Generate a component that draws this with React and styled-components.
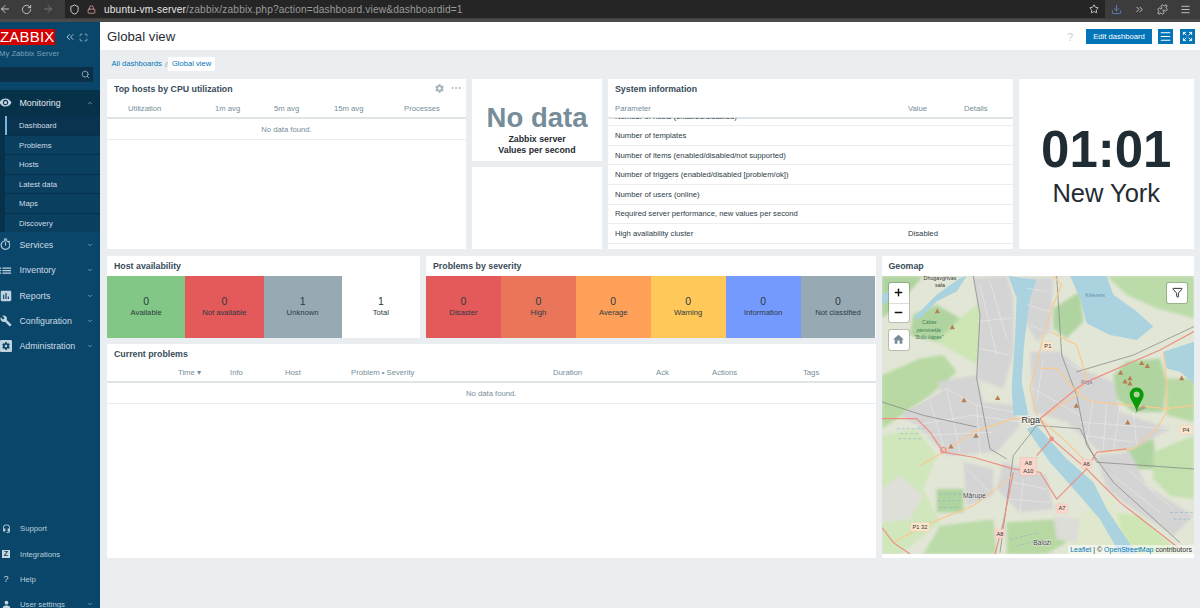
import React from 'react';
import styled, { createGlobalStyle } from 'styled-components';
import {
  ArrowLeft, ArrowRight, RotateCw, Shield, Star, Download, ChevronsRight, Puzzle, Menu,
  ChevronDown, ChevronUp, ChevronsLeft, Search, Ellipsis, Filter, Maximize, Expand, Plus, Minus, Lock,
} from 'lucide-react';
import { MdVisibility, MdOutlineTimer, MdList, MdAssessment, MdBuild, MdHeadsetMic, MdPerson, MdHome } from 'react-icons/md';
import { FaCog } from 'react-icons/fa';

const GlobalStyle = createGlobalStyle`
  html, body { margin: 0; padding: 0; height: 608px; overflow: hidden; background: #ebeef0; }
  body { font-family: "Liberation Sans", Arial, sans-serif; font-size: 7.7px; color: #1f2c33; }
  * { box-sizing: border-box; }
`;

const Page = styled.div`
  width: 1200px;
  height: 608px;
  display: flex;
  flex-direction: column;
  overflow: hidden;
`;

// Browser chrome
const Browser = styled.div`
  height: 22px;
  flex: none;
  background: #3c3c3c;
  display: flex;
  align-items: flex-start;
  color: #c8c8c8;
  border-bottom: 3px solid #4a4a4a;
`;
const NavIcons = styled.div`
  width: 65px;
  height: 18px;
  flex: none;
  display: flex;
  align-items: center;
  gap: 10px;
  padding-left: 0;
  svg:first-child { margin-left: -1px; }
`;
const UrlBar = styled.div`
  width: 1040px;
  height: 18px;
  flex: none;
  background: #252525;
  display: flex;
  align-items: center;
  padding: 0 6px 0 4px;
  gap: 5px;
  font-size: 10.2px;
  letter-spacing: 0.14px;
  color: #9a9a9a;
  b { font-weight: 400; color: #e6e6e6; }
`;
const LockMark = styled(Lock)`
  margin-left: 2px;
`;
const UrlText = styled.span`
  flex: 1;
  margin-left: 3px;
`;
const ToolIcons = styled.div`
  flex: 1;
  height: 18px;
  display: flex;
  align-items: center;
  gap: 12px;
  padding-left: 6px;
`;

const Body = styled.div`
  flex: 1;
  display: flex;
  min-height: 0;
`;

// Sidebar
const Sidebar = styled.aside`
  width: 100px;
  flex: none;
  background: #0a466a;
  color: #d5e1e8;
  display: flex;
  flex-direction: column;
  overflow: hidden;
`;
const LogoRow = styled.div`
  display: flex;
  align-items: center;
  height: 16px;
  margin-top: 7px;
`;
const Logo = styled.div`
  width: 55px;
  height: 16px;
  background: #d40000;
  color: #fff;
  font-size: 15px;
  line-height: 16px;
  letter-spacing: 0.2px;
  white-space: nowrap;
  overflow: hidden;
  text-align: right;
  padding-right: 2px;
`;
const LogoTools = styled.div`
  display: flex;
  align-items: center;
  gap: 3px;
  margin-left: 9px;
  color: #a9c3d2;
`;
const ServerName = styled.div`
  font-size: 7.7px;
  color: #7ba0b6;
  margin-top: 4px;
  height: 10px;
  line-height: 10px;
  margin-left: -1px;
  white-space: nowrap;
`;
const SearchBox = styled.div`
  width: 93px;
  height: 15px;
  margin-top: 8px;
  background: #0a2f46;
  display: flex;
  align-items: center;
  justify-content: flex-end;
  padding-right: 3px;
  color: #a6bfcd;
`;
const Group = styled.div`
  margin-top: 8px;
  background: #073049;
`;
const MenuRow = styled.div`
  height: 25.3px;
  display: flex;
  align-items: center;
  font-size: 8.8px;
  color: ${(p) => (p.$active ? '#e4ecf0' : '#cfdde6')};
  padding-right: 7px;
`;
const MenuIcon = styled.span`
  width: 19.5px;
  margin-left: -4px;
  flex: none;
  display: flex;
  justify-content: center;
  color: #bfd2dd;
`;
const MenuLabel = styled.span`
  flex: 1;
  margin-left: ${(p) => p.$indent ?? 4}px;
  white-space: nowrap;
`;
const GearBadge = styled.span`
  width: 12px;
  height: 12px;
  border-radius: 1px;
  background: #bfd2dd;
  color: #0a466a;
  display: flex;
  align-items: center;
  justify-content: center;
`;
const SubItem = styled.div`
  height: 19.5px;
  margin-left: 5px;
  padding-left: 14px;
  display: flex;
  align-items: center;
  font-size: 7.7px;
  color: #cfdde6;
  background: #0a3f60;
  border-top: 1px solid #07314b;
  position: relative;
  ${(p) => p.$current && `
    background: #0a3350;
    &::before {
      content: '';
      position: absolute;
      left: 0; top: 0; bottom: 0;
      width: 2px;
      background: #76b5dc;
    }
  `}
`;
const Spacer = styled.div`
  flex: 1;
`;
const FootRow = styled.div`
  height: 25.2px;
  flex: none;
  display: flex;
  align-items: center;
  font-size: 7.7px;
  color: #bcd0dc;
  padding-right: 7px;
  margin-bottom: ${(p) => (p.$last ? -9 : 0)}px;
`;
const FootIcon = styled.span`
  width: 12px;
  margin-right: 8px;
  flex: none;
  display: flex;
  justify-content: center;
  color: #c8d8e1;
  font-size: 9px;
`;
const ZBadge = styled.span`
  width: 8px;
  height: 8px;
  background: #c8d8e1;
  color: #0a466a;
  font-size: 7px;
  font-weight: 700;
  line-height: 8px;
  text-align: center;
`;

// Main area
const Main = styled.main`
  flex: 1;
  min-width: 0;
  display: flex;
  flex-direction: column;
`;
const Header = styled.header`
  height: 28px;
  flex: none;
  background: #fff;
  display: flex;
  align-items: center;
  padding: 2px 5px 1px 7px;
`;
const Title = styled.h1`
  flex: 1;
  margin: 0;
  font-size: 13.2px;
  font-weight: 400;
  color: #1f2c33;
`;
const HelpMark = styled.span`
  font-size: 10.5px;
  color: #c5ccd0;
  margin-right: 13px;
`;
const PrimaryButton = styled.button`
  height: 15px;
  width: 66px;
  border: 0;
  padding: 0;
  background: #0275b8;
  color: #fff;
  font: 7.7px "Liberation Sans", Arial, sans-serif;
  margin-right: 6px;
`;
const IconButton = styled.button`
  height: 15px;
  width: 15px;
  border: 0;
  padding: 0;
  background: #0275b8;
  color: #fff;
  display: flex;
  align-items: center;
  justify-content: center;
  margin-left: ${(p) => p.$gap || 0}px;
`;
const Crumbs = styled.nav`
  height: 29px;
  flex: none;
  display: flex;
  align-items: center;
  padding: 0 0 1px 8px;
  font-size: 7.6px;
  color: #0275b8;
`;
const Crumb = styled.span`
  padding: 3px 3.5px;
  height: 14px;
  line-height: 8px;
  background: ${(p) => (p.$current ? '#fff' : 'transparent')};
`;
const Sep = styled.span`
  color: #768d99;
  margin: 0 1px 0 0;
`;

const Board = styled.div`
  padding-left: 7px;
  width: 1094px;
  display: flex;
  flex-direction: column;
  gap: 7px;
`;
const TopRow = styled.div`
  display: flex;
  gap: 6px;
  height: 170px;
`;
const BottomRow = styled.div`
  display: flex;
  gap: 6px;
  height: 302px;
`;
const Card = styled.section`
  background: #fff;
  width: ${(p) => (p.$w ? `${p.$w}px` : 'auto')};
  flex: ${(p) => (p.$grow ? 1 : 'none')};
  position: relative;
  overflow: hidden;
  display: flex;
  flex-direction: column;
  min-height: 0;
`;
const CardTitle = styled.h2`
  margin: 0;
  height: 20px;
  padding: 0 7px;
  display: flex;
  align-items: center;
  font-size: 8.8px;
  font-weight: 700;
  color: #384c5a;
  flex: none;
`;
const CardTools = styled.div`
  position: absolute;
  right: 4px;
  top: 3px;
  display: flex;
  align-items: center;
  gap: 6px;
  color: #a8b4bb;
`;
const HeadRow = styled.div`
  display: grid;
  grid-template-columns: ${(p) => p.$cols};
  height: ${(p) => p.$h || 18}px;
  padding-left: ${(p) => p.$pad || 0}px;
  align-items: center;
  font-size: 7.7px;
  color: #768d99;
  border-bottom: 2px solid #dfe4e7;
  flex: none;
`;
const EmptyRow = styled.div`
  height: 21px;
  display: flex;
  align-items: center;
  justify-content: center;
  font-size: 7.7px;
  color: #768d99;
  border-bottom: 1px solid #ebeef0;
  flex: none;
`;
const SmallColumn = styled.div`
  width: 130px;
  flex: none;
  display: flex;
  flex-direction: column;
  gap: 6px;
`;
const NoData = styled(Card)`
  height: 82px;
  align-items: center;
  padding-top: 25px;
  color: #1f2c33;
`;
const BigValue = styled.div`
  font-size: 27.5px;
  font-weight: 700;
  line-height: 28px;
  color: #768d99;
`;
const NoDataLabel = styled.div`
  font-size: 8.8px;
  font-weight: 700;
  line-height: 11px;
  text-align: center;
  margin-top: 2px;
`;
const Blank = styled(Card)`
  height: 82px;
`;
const InfoBody = styled.div`
  flex: 1;
  overflow: hidden;
  min-height: 0;
  margin-top: -1px;
`;
const InfoRow = styled.div`
  display: grid;
  grid-template-columns: 293px 56px 1fr;
  height: 19.6px;
  align-items: center;
  padding-left: 7px;
  font-size: 7.7px;
  color: #2c3b44;
  border-bottom: 1px solid #ebeef0;
  flex: none;
  &:first-child { margin-top: -11.3px; }
`;
const ClockCard = styled(Card)`
  align-items: center;
  justify-content: center;
  padding-top: 4px;
`;
const ClockTime = styled.div`
  font-size: 51px;
  font-weight: 700;
  line-height: 50px;
  color: #1f2c33;
`;
const ClockZone = styled.div`
  font-size: 25.5px;
  line-height: 30px;
  color: #1f2c33;
  margin-top: 3px;
`;
const LeftStack = styled.div`
  width: 768.5px;
  flex: none;
  display: flex;
  flex-direction: column;
  gap: 6px;
`;
const StatRow = styled.div`
  display: flex;
  gap: 6px;
  height: 82px;
  flex: none;
`;
const Tiles = styled.div`
  flex: 1;
  display: grid;
  grid-template-columns: repeat(${(p) => p.$n}, 1fr);
`;
const Tile = styled.div`
  background: ${(p) => p.$bg};
  display: flex;
  flex-direction: column;
  align-items: center;
  justify-content: center;
  font-size: 7.7px;
  color: #2c3b44;
  line-height: 11px;
  padding-bottom: 1px;
  span:first-child { font-size: 10.5px; line-height: 12px; }
`;
const MapBox = styled.div`
  position: relative;
  flex: none;
  height: 278px;
  overflow: hidden;
  svg { display: block; }
`;
const MapControls = styled.div`
  position: absolute;
  left: 7px;
  top: 7px;
  display: flex;
  flex-direction: column;
  gap: 8px;
`;
const MapGroup = styled.div`
  width: 20px;
  background: #fff;
  border-radius: 2px;
  box-shadow: 0 0 0 1px rgba(0, 0, 0, 0.18);
  display: flex;
  flex-direction: column;
  color: ${(p) => p.$color || '#111'};
`;
const MapBtn = styled.div`
  height: 19.5px;
  display: flex;
  align-items: center;
  justify-content: center;
  & + & { border-top: 1px solid #ddd; }
`;
const MapFilter = styled(MapBtn)`
  position: absolute;
  right: 7px;
  top: 7px;
  width: 20px;
  background: #fff;
  border-radius: 2px;
  box-shadow: 0 0 0 1px rgba(0, 0, 0, 0.18);
  color: #222;
`;
const Attribution = styled.div`
  position: absolute;
  right: 0;
  bottom: 0;
  padding: 0 2px;
  font-size: 7px;
  line-height: 9px;
  color: #333;
  background: rgba(255, 255, 255, 0.55);
  a { color: #0275b8; }
`;

const cpuCols = '21px 87px 59px 60px 70px 1fr';
const problemCols = '71px 52px 55px 66px 202px 103px 56px 91px 1fr';

const peaks = [
  [172, 168], [217, 216], [722, 352], [785, 323], [802, 332], [735, 378], [750, 368], [750, 384],
  [905, 368], [252, 434], [353, 427], [288, 540], [213, 572], [589, 450], [743, 500],
];

const shields = [
  [487, 260, 33, 26, 'P1'], [900, 510, 36, 26, 'P4'], [603, 612, 33, 26, 'A6'], [528, 744, 36, 28, 'A7'],
  [345, 820, 30, 26, 'A8'], [92, 800, 56, 26, 'P1 32'],
];

// thin street lines that give the town its grain
const streets = [
  'M70 470L200 400 290 450 400 470', 'M100 510L280 480 420 500', 'M130 540L340 530', 'M200 400L240 590',
  'M150 440L190 570', 'M290 450L300 600', 'M640 430L620 560', 'M680 440L670 580', 'M720 450L700 590',
  'M760 470L770 570', 'M600 500L860 520', 'M610 540L760 560', 'M300 90L350 300', 'M330 80L380 250',
  'M290 200L395 190', 'M295 280L390 300', 'M440 100L500 110', 'M440 150L510 170', 'M450 210L500 230',
  'M400 680L500 700', 'M380 730L510 740', 'M430 670L420 770', 'M700 660L840 770', 'M740 640L880 760',
  'M260 640L330 710', 'M560 320L610 350', 'M460 400L600 480', 'M490 310L470 440',
];

const OsmMap = () => (
  <svg width="312" height="278" viewBox="6 64 936 830" preserveAspectRatio="none">
    <defs>
      <filter id="soft" x="-5%" y="-5%" width="110%" height="110%"><feGaussianBlur stdDeviation="5" /></filter>
    </defs>
    <rect x="6" y="64" width="936" height="830" fill="#e2e6d6" />
    <g filter="url(#soft)">
      {/* forests and parks */}
      <g fill="#cde6b4">
        <path d="M6 64H130L90 110 30 170 6 190Z" fill="#b0d4a0" />
        <path d="M90 240L100 180 170 150 240 190 230 240 170 260Z" fill="#b0d4a0" />
        <path d="M170 260L240 190 290 150 380 170 390 300 330 350 260 310Z" />
        <path d="M6 360L120 310 190 300 230 350 150 420 80 470 6 520Z" fill="#b8d9a3" />
        <path d="M520 160L600 110 610 200 560 250 520 220Z" fill="#b0d4a0" />
        <path d="M700 360L740 320 840 310 860 380 850 470 760 470 710 430Z" fill="#b0d4a0" />
        <path d="M860 370L942 370 942 500 860 480Z" fill="#b8d9a3" />
        <path d="M680 64H942V190L830 160 740 120Z" fill="#bbdba9" />
        <path d="M740 580L820 550 830 640 760 640Z" fill="#b0d4a0" />
        <path d="M820 590L942 540V730L870 720 820 670Z" fill="#c3e0ae" />
        <path d="M6 540L110 520 170 600 130 700 180 800 60 894H6Z" fill="#d0e6bb" />
        <path d="M170 700H250L250 770 170 770Z" fill="#b0d4a0" />
        <path d="M180 810L340 790 350 894H130Z" fill="#bbdba9" />
        <path d="M380 800L520 790 560 860 500 894H380Z" fill="#b8d9a3" />
        <path d="M700 770L780 780 900 894H760Z" fill="#cde6b4" />
        <path d="M560 800L700 720 740 894H560Z" fill="#dfe8cc" />
      </g>
      {/* built up */}
      <g fill="#d4d4d4">
        <path d="M60 480L210 390 300 440 400 450 420 510 350 590 200 600 110 510Z" />
        <path d="M280 70L380 64 400 130 400 290 370 400 290 370 300 180Z" />
        <path d="M450 290L540 290 600 340 700 380 720 470 870 520 760 580 660 590 560 500 460 470Z" />
        <path d="M650 600L750 590 800 690 940 780 880 840 760 760 680 700Z" />
        <path d="M430 70H520L510 230 470 260 430 190Z" />
        <path d="M370 620L500 660 520 760 420 770 350 700Z" />
        <path d="M250 620L340 640 340 720 260 750Z" />
        <path d="M6 700L60 660 130 720 90 790 6 800Z" fill="#dfdfda" />
        <path d="M170 380L290 360 310 440 210 450Z" />
        <path d="M520 780L600 790 590 860 530 850Z" fill="#dcdcd8" />
      </g>
    </g>
    {/* water */}
    <g fill="#aad3df">
      <path d="M570 64H680L700 120 770 170 820 215 770 255 690 240 620 205 600 130Z" />
      <path d="M850 290L942 260V385L900 350 860 340Z" />
      <path d="M385 64L470 75 450 130 432 270 425 380 445 480 400 480 395 400 405 250 410 130Z" />
      <path d="M440 520L470 510 560 610 640 680 680 760 770 894H720L660 790 590 710 510 620Z" />
      <path d="M100 190L170 120 240 70 260 64 230 110 170 140 120 190Z" />
      <path d="M6 120L60 90 40 130 6 150Z" />
    </g>
    <g fill="none" stroke="#fff" strokeWidth="1.6" opacity="0.6">
      {streets.map((d) => <path key={d} d={d} />)}
    </g>
    {/* wetland dashes */}
    <g stroke="#6aa7d6" strokeWidth="1.6" strokeDasharray="9 6" opacity="0.8">
      <path d="M50 520H130M60 535H120M55 550H125" />
      <path d="M175 715H245M172 735H248M178 755H240" />
      <path d="M870 770H942M880 790H930" />
      <path d="M390 850L480 830M410 870L490 850" />
    </g>
    {/* rail */}
    <g fill="none" stroke="#7d7d7d" strokeWidth="2">
      <path d="M280 64L300 180 290 370 330 580 380 610" />
      <path d="M6 440L130 480 290 515" />
      <path d="M530 64L545 300 590 420 620 570 700 680 900 860" />
      <path d="M590 350L760 300 942 215" />
      <path d="M360 890L400 600 470 510 600 520 650 620 942 640" />
    </g>
    {/* roads */}
    <g fill="none" stroke="#fac98f" strokeWidth="3.5">
      <path d="M520 64L545 90 520 150 490 240 470 330 450 400 470 480" />
      <path d="M510 230L590 270 620 370 590 420 480 490" />
      <path d="M480 340L530 340 600 420 640 440 860 460 942 450" />
      <path d="M850 290L860 380 860 470 830 520 760 580 660 590" />
      <path d="M120 630L190 590 280 530 400 490 480 490" />
      <path d="M480 490L560 560 620 620" />
      <path d="M40 860L130 810 280 750 400 660" />
    </g>
    <g fill="none" stroke="#ed8f80" strokeWidth="3.5">
      <path d="M6 490L110 490 150 530 190 590 280 605 400 640 480 650 530 730 620 640 650 590 740 580" />
      <path d="M620 380L840 285 942 230" />
      <path d="M480 490L590 400 620 380" />
      <path d="M470 600L515 550 620 640 660 680 720 740 850 840 900 880" />
      <path d="M400 650L370 800 345 894" />
      <path d="M6 815L40 860 90 894" />
      <path d="M515 550L480 490" />
    </g>
    <circle cx="190" cy="584" r="8" fill="none" stroke="#ed8f80" strokeWidth="3.5" />
    <circle cx="515" cy="550" r="7" fill="#ed8f80" />
    <g fill="#b87f52">
      {peaks.map(([x, y]) => <path key={`${x}-${y}`} d={`M${x} ${y - 7}l8 14h-16z`} />)}
    </g>
    <g fontFamily='"Liberation Sans", Arial, sans-serif' textAnchor="middle">
      {shields.map(([x, y, w, h, t]) => (
        <g key={t}>
          <rect x={x} y={y} width={w} height={h} rx="3" fill={t[0] === 'A' ? '#f9d5cc' : '#fbe6cc'} stroke="#f0c3b2" />
          <text x={x + w / 2} y={y + 19} fontSize="17" fill="#333">{t}</text>
        </g>
      ))}
      <rect x="420" y="606" width="50" height="54" rx="3" fill="#f9d5cc" stroke="#e8a99a" />
      <text x="445" y="629" fontSize="17" fill="#333">A8</text>
      <text x="445" y="651" fontSize="17" fill="#333">A10</text>
      <text x="452" y="504" fontSize="27" fill="#222" stroke="#fff" strokeWidth="3" paintOrder="stroke">Riga</text>
      <text x="283" y="726" fontSize="20" fill="#333" stroke="#fff" strokeWidth="2" paintOrder="stroke">Mārupe</text>
      <text x="487" y="868" fontSize="20" fill="#333" stroke="#fff" strokeWidth="2" paintOrder="stroke">Baloži</text>
      <text x="620" y="385" fontSize="16" fill="#8a7f9c">Rīga</text>
      <text x="645" y="127" fontSize="15" fill="#5d8fa8">Ķīšezers</text>
      <text x="180" y="76" fontSize="16" fill="#333">Dhugavgrīvas</text>
      <text x="180" y="96" fontSize="16" fill="#333">sala</text>
      <g fontSize="15" fontStyle="italic" fill="#3a7d4f">
        <text x="148" y="208">Cābas</text>
        <text x="146" y="230">pieminekļa</text>
        <text x="146" y="252">"Buļļu kāpas"</text>
      </g>
    </g>
    {/* marker */}
    <path d="M765 473L800 458 790 450 770 462Z" fill="#000" opacity="0.18" />
    <path fillRule="evenodd" fill="#0a9a0a" d="M770 397c-12 0-21 10-21 21 0 15 15 28 21 52 6-24 21-37 21-52 0-11-9-21-21-21zm0 12a9 9 0 1 1 0 18 9 9 0 0 1 0-18z" />
  </svg>
);

const systemRows = [
  ['Number of hosts (enabled/disabled)', '', ''],
  ['Number of templates', '', ''],
  ['Number of items (enabled/disabled/not supported)', '', ''],
  ['Number of triggers (enabled/disabled [problem/ok])', '', ''],
  ['Number of users (online)', '', ''],
  ['Required server performance, new values per second', '', ''],
  ['High availability cluster', 'Disabled', ''],
];

const menuItems = [
  ['Services', <MdOutlineTimer size={13} key="s" />],
  ['Inventory', <MdList size={15} key="i" />],
  ['Reports', <MdAssessment size={14} key="r" />],
  ['Configuration', <MdBuild size={12} key="c" />],
  ['Administration', <GearBadge key="a"><FaCog size={8} /></GearBadge>],
];

const App = () => (
  <Page>
    <GlobalStyle />
    <Browser>
      <NavIcons>
        <ArrowLeft size={12} />
        <RotateCw size={11} />
        <ArrowRight size={12} color="#777" />
      </NavIcons>
      <UrlBar>
        <Shield size={11} color="#ddd" />
        <LockMark size={9} color="#e6a4a4" />
        <UrlText><b>ubuntu-vm-server</b>/zabbix/zabbix.php?action=dashboard.view&amp;dashboardid=1</UrlText>
        <Star size={10} color="#ddd" />
      </UrlBar>
      <ToolIcons>
        <Download size={11} color="#5b86c4" />
        <ChevronsRight size={11} />
        <Puzzle size={11} />
        <Menu size={11} />
      </ToolIcons>
    </Browser>
    <Body>
      <Sidebar>
        <LogoRow>
          <Logo>ZABBIX</Logo>
          <LogoTools>
            <ChevronsLeft size={12} />
            <Maximize size={9} />
          </LogoTools>
        </LogoRow>
        <ServerName>My Zabbix Server</ServerName>
        <SearchBox><Search size={9} /></SearchBox>
        <Group>
          <MenuRow $active>
            <MenuIcon><MdVisibility size={13} /></MenuIcon>
            <MenuLabel>Monitoring</MenuLabel>
            <ChevronUp size={6} />
          </MenuRow>
          {['Dashboard', 'Problems', 'Hosts', 'Latest data', 'Maps', 'Discovery'].map((label) => (
            <SubItem key={label} $current={label === 'Dashboard'}>{label}</SubItem>
          ))}
        </Group>
        {menuItems.map(([label, icon]) => (
          <MenuRow key={label}>
            <MenuIcon>{icon}</MenuIcon>
            <MenuLabel>{label}</MenuLabel>
            <ChevronDown size={6} />
          </MenuRow>
        ))}
        <Spacer />
        <FootRow><FootIcon><MdHeadsetMic size={9} /></FootIcon>Support</FootRow>
        <FootRow><FootIcon><ZBadge>Z</ZBadge></FootIcon>Integrations</FootRow>
        <FootRow><FootIcon>?</FootIcon>Help</FootRow>
        <FootRow $last><FootIcon><MdPerson size={11} /></FootIcon><MenuLabel $indent={0}>User settings</MenuLabel><ChevronDown size={6} /></FootRow>
      </Sidebar>
      <Main>
        <Header>
          <Title>Global view</Title>
          <HelpMark>?</HelpMark>
          <PrimaryButton>Edit dashboard</PrimaryButton>
          <IconButton><Menu size={13} /></IconButton>
          <IconButton $gap={7}><Expand size={11} /></IconButton>
        </Header>
        <Crumbs>
          <Crumb>All dashboards</Crumb>
          <Sep>/</Sep>
          <Crumb $current>Global view</Crumb>
        </Crumbs>
        <Board>
          <TopRow>
            <Card $w={359}>
              <CardTitle>Top hosts by CPU utilization</CardTitle>
              <CardTools><FaCog size={9} /><Ellipsis size={12} /></CardTools>
              <HeadRow $cols={cpuCols} $h={20}>
                <span />
                <span>Utilization</span>
                <span>1m avg</span>
                <span>5m avg</span>
                <span>15m avg</span>
                <span>Processes</span>
              </HeadRow>
              <EmptyRow>No data found.</EmptyRow>
            </Card>
            <SmallColumn>
              <NoData>
                <BigValue>No data</BigValue>
                <NoDataLabel>Zabbix server<br />Values per second</NoDataLabel>
              </NoData>
              <Blank />
            </SmallColumn>
            <Card $w={404.5}>
              <CardTitle>System information</CardTitle>
              <HeadRow $cols="293px 56px 1fr" $h={20} $pad={7}>
                <span>Parameter</span>
                <span>Value</span>
                <span>Details</span>
              </HeadRow>
              <InfoBody>
                {systemRows.map(([param, value, detail]) => (
                  <InfoRow key={param}>
                    <span>{param}</span>
                    <span>{value}</span>
                    <span>{detail}</span>
                  </InfoRow>
                ))}
              </InfoBody>
            </Card>
            <ClockCard $grow>
              <ClockTime>01:01</ClockTime>
              <ClockZone>New York</ClockZone>
            </ClockCard>
          </TopRow>
          <BottomRow>
            <LeftStack>
              <StatRow>
                <Card $w={313}>
                  <CardTitle>Host availability</CardTitle>
                  <Tiles $n={4}>
                    <Tile $bg="#82c785"><span>0</span><span>Available</span></Tile>
                    <Tile $bg="#e45959"><span>0</span><span>Not available</span></Tile>
                    <Tile $bg="#97aab3"><span>1</span><span>Unknown</span></Tile>
                    <Tile $bg="#fff"><span>1</span><span>Total</span></Tile>
                  </Tiles>
                </Card>
                <Card $grow>
                  <CardTitle>Problems by severity</CardTitle>
                  <Tiles $n={6}>
                    <Tile $bg="#e45959"><span>0</span><span>Disaster</span></Tile>
                    <Tile $bg="#e97659"><span>0</span><span>High</span></Tile>
                    <Tile $bg="#ffa059"><span>0</span><span>Average</span></Tile>
                    <Tile $bg="#ffc859"><span>0</span><span>Warning</span></Tile>
                    <Tile $bg="#7499ff"><span>0</span><span>Information</span></Tile>
                    <Tile $bg="#97aab3"><span>0</span><span>Not classified</span></Tile>
                  </Tiles>
                </Card>
              </StatRow>
              <Card $grow>
                <CardTitle>Current problems</CardTitle>
                <HeadRow $cols={problemCols} $h={19}>
                  <span />
                  <span>Time ▾</span>
                  <span>Info</span>
                  <span>Host</span>
                  <span>Problem • Severity</span>
                  <span>Duration</span>
                  <span>Ack</span>
                  <span>Actions</span>
                  <span>Tags</span>
                </HeadRow>
                <EmptyRow>No data found.</EmptyRow>
              </Card>
            </LeftStack>
            <Card $grow>
              <CardTitle>Geomap</CardTitle>
              <MapBox>
                <OsmMap />
                <MapControls>
                  <MapGroup>
                    <MapBtn><Plus size={11} strokeWidth={3} /></MapBtn>
                    <MapBtn><Minus size={11} strokeWidth={3} /></MapBtn>
                  </MapGroup>
                  <MapGroup $color="#768d99">
                    <MapBtn><MdHome size={13} /></MapBtn>
                  </MapGroup>
                </MapControls>
                <MapFilter><Filter size={11} /></MapFilter>
                <Attribution><a>Leaflet</a> | © <a>OpenStreetMap</a> contributors</Attribution>
              </MapBox>
            </Card>
          </BottomRow>
        </Board>
      </Main>
    </Body>
  </Page>
);

export default App;
